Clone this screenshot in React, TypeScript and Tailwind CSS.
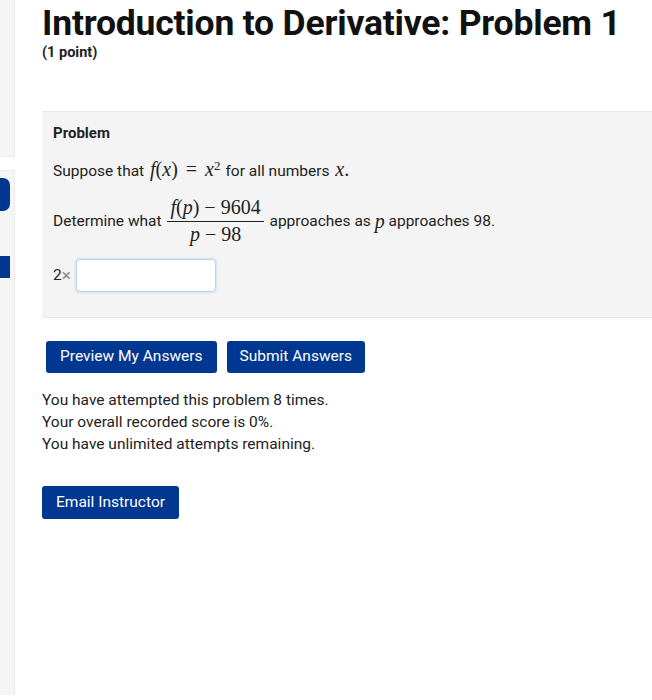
import React from "react";

const M = ({ children }: { children: React.ReactNode }) => (
  <span className="italic" style={{ fontFamily: '"Liberation Serif", serif' }}>{children}</span>
);
const R = ({ children }: { children: React.ReactNode }) => (
  <span style={{ fontFamily: '"Liberation Serif", serif' }}>{children}</span>
);

export default function App() {
  return (
    <div className="flex min-h-[700px] w-[652px] overflow-hidden bg-white text-[#222]" style={{ fontFamily: 'Roboto, "Liberation Sans", sans-serif' }}>
      <div className="flex w-[15px] shrink-0 flex-col">
        <div className="h-[157px] border-b border-r border-[#ececec] bg-[#f5f5f5]" />
        <div className="mt-[13px] flex h-[525px] flex-col border-r border-t border-[#ececec] bg-[#f5f5f5]">
          <div className="mt-[7px] h-[33px] w-[10px] rounded-r-[7px] bg-[#003791]" />
          <div className="mt-[45px] h-[22px] w-[10px] bg-[#003791]" />
        </div>
      </div>
      <div className="flex-1 pl-[27px]">
        <h1 className="mt-[3px] whitespace-nowrap text-[35.5px] font-bold leading-[40px] tracking-[-0.2px] text-[#111]">
          Introduction to Derivative: Problem 1
        </h1>
        <div className="mt-[0px] text-[14.5px] font-bold leading-[20px]">(1 point)</div>
        <div className="mt-[48px] h-[207px] border-t border-b border-[#e8e8e8] bg-[#f4f4f4] pl-[11px] pt-[11px]">
          <div className="text-[15px] font-bold leading-[20px]">Problem</div>
          <div className="mt-[15px] flex items-baseline text-[15.5px] leading-[22px]">
            <span>Suppose that&nbsp;</span>
            <span className="ml-[2px] text-[20px]"><M>f</M><R>(</R><M>x</M><R>)</R><R><span className="px-[8px]">=</span></R><M>x</M><sup className="text-[13px]"><R>2</R></sup></span>
            <span className="ml-[5px]">for all numbers&nbsp;</span><span className="ml-[2px] text-[20px]"><M>x</M><R>.</R></span>
          </div>
          <div className="mt-[14px] flex items-center text-[15.5px] leading-[22px]">
            Determine what&nbsp;
            <span className="mx-[2px] inline-flex flex-col items-center text-[20px] leading-[23px]">
              <span className="px-[3px] pb-[2px]"><M>f</M><R>(</R><M>p</M><R>) − 9604</R></span>
              <span className="h-[1px] w-full bg-[#222]" />
              <span className="pt-[1px]"><M>p</M><R> − 98</R></span>
            </span>
            &nbsp;approaches as&nbsp;<span className="text-[20px]"><M>p</M></span>&nbsp;approaches 98.
          </div>
          <div className="mt-[13px] flex items-center text-[15.5px]">
            <span>2</span><span className="text-[17px] text-[#888]">×</span>
            <div className="ml-[5px] h-[33px] w-[140px] rounded-[4px] border border-[#b9d3ee] bg-white shadow-[0_0_3px_rgba(120,170,230,0.5)]" />
          </div>
        </div>
        <div className="mt-[23px] flex gap-[10px] pl-[4px]">
          <button className="h-[32px] rounded-[3px] bg-[#003791] px-[14px] text-[15.5px] text-white">Preview My Answers</button>
          <button className="h-[32px] rounded-[3px] bg-[#003791] px-[13px] text-[15.5px] text-white">Submit Answers</button>
        </div>
        <div className="mt-[16px] text-[15.5px] leading-[22px]">
          <div>You have attempted this problem 8 times.</div>
          <div>Your overall recorded score is 0%.</div>
          <div>You have unlimited attempts remaining.</div>
        </div>
        <button className="mt-[31px] h-[33px] rounded-[3px] bg-[#003791] px-[14px] text-[15.5px] text-white">Email Instructor</button>
      </div>
    </div>
  );
}
